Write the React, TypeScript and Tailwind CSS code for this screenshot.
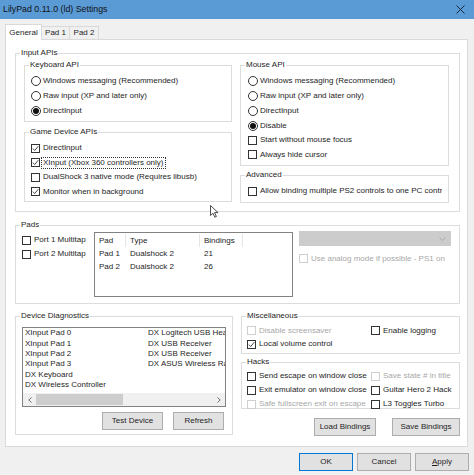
import React from "react";

function Group({ title, className, children }: { title: string; className: string; children?: React.ReactNode }) {
  return (
    <div className={`relative border border-[#dcdcdc] ${className}`}>
      <span className="absolute left-[4px] -top-[6px] bg-white px-[1px] leading-[10px] text-[#1e1e1e]">{title}</span>
      {children}
    </div>
  );
}

function Box({ checked, disabled }: { checked?: boolean; disabled?: boolean }) {
  return (
    <span
      className={`w-[9px] h-[9px] shrink-0 border bg-white flex items-center justify-center ${
        disabled ? "border-[#cfcfcf]" : "border-[#333333]"
      }`}
    >
      {checked && (
        <svg width="7" height="7" viewBox="0 0 7 7">
          <path d="M0.8 3.6 L2.7 5.5 L6.3 1.2" fill="none" stroke="#333" strokeWidth="0.9" />
        </svg>
      )}
    </span>
  );
}

function Check({
  label,
  checked,
  disabled,
  focus,
  h = "h-[15px]",
  w = "",
}: {
  label: string;
  checked?: boolean;
  disabled?: boolean;
  focus?: boolean;
  h?: string;
  w?: string;
}) {
  return (
    <div className={`flex items-center gap-[3px] ${h} ${w} whitespace-nowrap overflow-hidden`}>
      <Box checked={checked} disabled={disabled} />
      <span
        className={`${disabled ? "text-[#a8a8a8]" : "text-[#1e1e1e]"} ${
          focus ? "outline outline-1 outline-dotted outline-[#333] px-[1px] -ml-[1px] leading-[10px]" : ""
        }`}
      >
        {label}
      </span>
    </div>
  );
}

function Radio({ label, checked }: { label: string; checked?: boolean }) {
  return (
    <div className="flex items-center gap-[2px] h-[15px] whitespace-nowrap">
      <span className="w-[10px] h-[10px] shrink-0 rounded-full border border-[#333] bg-white flex items-center justify-center">
        {checked && <span className="w-[6px] h-[6px] rounded-full bg-[#111]" />}
      </span>
      <span>{label}</span>
    </div>
  );
}

function Btn({ label, w, primary }: { label: React.ReactNode; w: string; primary?: boolean }) {
  return (
    <div
      className={`${w} h-[18px] flex items-center justify-center bg-[#e1e1e1] border ${
        primary ? "border-[#0078d7]" : "border-[#adadad]"
      } text-[#1e1e1e]`}
    >
      {label}
    </div>
  );
}

export default function App() {
  return (
    <div className="w-[474px] h-[475px] bg-[#f0f0f0] relative overflow-hidden font-['Liberation_Sans',Arial,sans-serif] text-[8px] text-[#1e1e1e] leading-none">
      {/* title bar */}
      <div className="h-[19px] bg-[#5a9ad5] flex items-center justify-between pl-[3px] pr-[9px]">
        <span className="text-[8.8px] text-[#111]">LilyPad 0.11.0 (ld) Settings</span>
        <svg width="9" height="9" viewBox="0 0 9 9">
          <path d="M0.5 0.5 L8.5 8.5 M8.5 0.5 L0.5 8.5" stroke="#1b2a3a" strokeWidth="1" />
        </svg>
      </div>

      {/* tabs */}
      <div className="flex items-end h-[20px] pl-[5px]">
        <div className="relative z-10 w-[37px] h-[16px] -mb-px bg-white border-t border-l border-r border-[#d9d9d9] flex items-center justify-center">
          General
        </div>
        <div className="w-[28px] h-[13px] border-t border-r border-[#d9d9d9] flex items-center justify-center">Pad 1</div>
        <div className="w-[29px] h-[13px] border-t border-r border-[#d9d9d9] flex items-center justify-center">Pad 2</div>
      </div>

      {/* panel */}
      <div className="ml-[5px] w-[463px] h-[408px] bg-white border border-[#d9d9d9] pl-[9px] pt-[13px]">
        <Group title="Input APIs" className="w-[445px] h-[159px]">
          <div className="flex gap-[8px] pl-[8px] pt-[11px]">
            <div className="flex flex-col gap-[10px]">
              <Group title="Keyboard API" className="w-[208px] h-[57px]">
                <div className="pl-[6px] pt-[7px]">
                  <Radio label="Windows messaging (Recommended)" />
                  <Radio label="Raw input (XP and later only)" />
                  <Radio label="DirectInput" checked />
                </div>
              </Group>
              <Group title="Game Device APIs" className="w-[208px] h-[70px]">
                <div className="pl-[6px] pt-[8px]">
                  <Check label="DirectInput" checked h="h-[14.5px]" />
                  <Check label="XInput (Xbox 360 controllers only)" checked focus h="h-[14.5px]" />
                  <Check label="DualShock 3 native mode (Requires libusb)" h="h-[14.5px]" />
                  <Check label="Monitor when in background" checked h="h-[14.5px]" />
                </div>
              </Group>
            </div>
            <div className="flex flex-col gap-[9px]">
              <Group title="Mouse API" className="w-[209px] h-[101px]">
                <div className="pl-[7px] pt-[7px]">
                  <Radio label="Windows messaging (Recommended)" />
                  <Radio label="Raw input (XP and later only)" />
                  <Radio label="DirectInput" />
                  <Radio label="Disable" checked />
                  <Check label="Start without mouse focus" h="h-[14.5px]" />
                  <Check label="Always hide cursor" h="h-[14.5px]" w="w-[86px]" />
                </div>
              </Group>
              <Group title="Advanced" className="w-[209px] h-[28px]">
                <div className="pl-[7px] pt-[8px] w-[201px] overflow-hidden">
                  <Check label="Allow binding multiple PS2 controls to one PC control" h="h-[14px]" />
                </div>
              </Group>
            </div>
          </div>
        </Group>

        <Group title="Pads" className="mt-[13px] w-[445px] h-[79px]">
          <div className="flex pl-[6px] pt-[6px]">
            <div className="w-[72px] pt-[1px]">
              <Check label="Port 1 Multitap" h="h-[14px]" />
              <Check label="Port 2 Multitap" h="h-[14px]" />
            </div>
            <div className="w-[199px] h-[65px] border border-[#828282] pt-[1px]">
              <div className="flex h-[13px] items-center">
                <div className="w-[31px] h-full pl-[4px] flex items-center border-r border-[#e5e5e5]">Pad</div>
                <div className="w-[74px] h-full pl-[4px] flex items-center border-r border-[#e5e5e5]">Type</div>
                <div className="w-[43px] h-full pl-[4px] flex items-center border-r border-[#e5e5e5]">Bindings</div>
              </div>
              {[
                ["Pad 1", "Dualshock 2", "21"],
                ["Pad 2", "Dualshock 2", "26"],
              ].map((r) => (
                <div key={r[0]} className="flex h-[13px] items-center">
                  <div className="w-[31px] pl-[4px]">{r[0]}</div>
                  <div className="w-[74px] pl-[4px]">{r[1]}</div>
                  <div className="w-[43px] pl-[4px]">{r[2]}</div>
                </div>
              ))}
            </div>
            <div className="ml-[6px] -mt-[1px]">
              <div className="w-[152px] h-[15px] bg-[#cccccc] flex items-center justify-end pr-[5px]">
                <svg width="7" height="4" viewBox="0 0 7 4">
                  <path d="M0.5 0.5 L3.5 3.5 L6.5 0.5" fill="none" stroke="#a0a0a0" strokeWidth="0.8" />
                </svg>
              </div>
              <div className="mt-[6px] w-[146px] overflow-hidden">
                <Check label="Use analog mode if possible - PS1 only" disabled h="h-[13px]" />
              </div>
            </div>
          </div>
        </Group>

        <div className="flex gap-[8px] mt-[12px]">
          <Group title="Device Diagnostics" className="w-[218px] h-[119px]">
            <div className="pl-[6px] pt-[10px]">
              <div className="w-[204px] h-[80px] border border-[#828282] flex flex-col overflow-hidden">
                <div className="flex pl-[2px]">
                  <div className="w-[123px] shrink-0">
                    {["XInput Pad 0", "XInput Pad 1", "XInput Pad 2", "XInput Pad 3", "DX Keyboard", "DX Wireless Controller"].map(
                      (t) => (
                        <div key={t} className="h-[10.4px] flex items-center whitespace-nowrap">
                          {t}
                        </div>
                      )
                    )}
                  </div>
                  <div className="w-[77px] shrink-0 overflow-hidden">
                    {["DX Logitech USB Headset", "DX USB Receiver", "DX USB Receiver", "DX ASUS Wireless Radio Control"].map(
                      (t, i) => (
                        <div key={i} className="h-[10.4px] flex items-center whitespace-nowrap">
                          {t}
                        </div>
                      )
                    )}
                  </div>
                </div>
                <div className="mt-auto h-[13px] bg-[#f0f0f0] flex items-center">
                  <div className="w-[13px] h-full flex items-center justify-center">
                    <svg width="4" height="6" viewBox="0 0 4 6">
                      <path d="M3.5 0.5 L0.8 3 L3.5 5.5" fill="none" stroke="#606060" strokeWidth="0.9" />
                    </svg>
                  </div>
                  <div className="w-[87px] h-[11px] bg-[#cdcdcd]" />
                  <div className="flex-1" />
                  <div className="w-[13px] h-full flex items-center justify-center">
                    <svg width="4" height="6" viewBox="0 0 4 6">
                      <path d="M0.5 0.5 L3.2 3 L0.5 5.5" fill="none" stroke="#606060" strokeWidth="0.9" />
                    </svg>
                  </div>
                </div>
              </div>
              <div className="flex gap-[10px] pl-[80px] mt-[5px]">
                <Btn label="Test Device" w="w-[61px]" />
                <Btn label="Refresh" w="w-[51px]" />
              </div>
            </div>
          </Group>

          <div className="flex flex-col">
            <Group title="Miscellaneous" className="w-[219px] h-[38px]">
              <div className="pl-[5px] pt-[7px]">
                <div className="flex">
                  <div className="w-[124px]">
                    <Check label="Disable screensaver" disabled h="h-[13.5px]" />
                  </div>
                  <Check label="Enable logging" h="h-[13.5px]" />
                </div>
                <Check label="Local volume control" checked h="h-[13.5px]" />
              </div>
            </Group>
            <Group title="Hacks" className="mt-[8px] w-[219px] h-[47px]">
              <div className="pl-[5px] pt-[6px] flex">
                <div className="w-[124px]">
                  <Check label="Send escape on window close" h="h-[14px]" />
                  <Check label="Exit emulator on window close" h="h-[14px]" w="w-[123px]" />
                  <Check label="Safe fullscreen exit on escape" disabled h="h-[14px]" />
                </div>
                <div className="w-[84px] overflow-hidden">
                  <Check label="Save state # in title" disabled h="h-[14px]" />
                  <Check label="Guitar Hero 2 Hack" h="h-[14px]" />
                  <Check label="L3 Toggles Turbo" h="h-[14px]" w="w-[82px]" />
                </div>
              </div>
            </Group>
            <div className="flex justify-end gap-[16px] mt-[9px] pr-[0px]">
              <Btn label="Load Bindings" w="w-[62px]" />
              <Btn label="Save Bindings" w="w-[68px]" />
            </div>
          </div>
        </div>
      </div>

      {/* bottom buttons */}
      <div className="flex justify-end gap-[4px] pr-[5px] mt-[6px]">
        <Btn label="OK" w="w-[54px]" primary />
        <Btn label="Cancel" w="w-[54px]" />
        <Btn
          label={
            <span>
              <span className="underline">A</span>pply
            </span>
          }
          w="w-[54px]"
        />
      </div>

      {/* mouse cursor */}
      <svg className="absolute left-[210px] top-[205px]" width="9" height="13" viewBox="0 0 9 13">
        <path d="M0.5 0.5 L0.5 10.5 L3 8.2 L4.8 12.2 L6.4 11.5 L4.6 7.6 L8 7.6 Z" fill="#fff" stroke="#222" strokeWidth="0.8" />
      </svg>
    </div>
  );
}
